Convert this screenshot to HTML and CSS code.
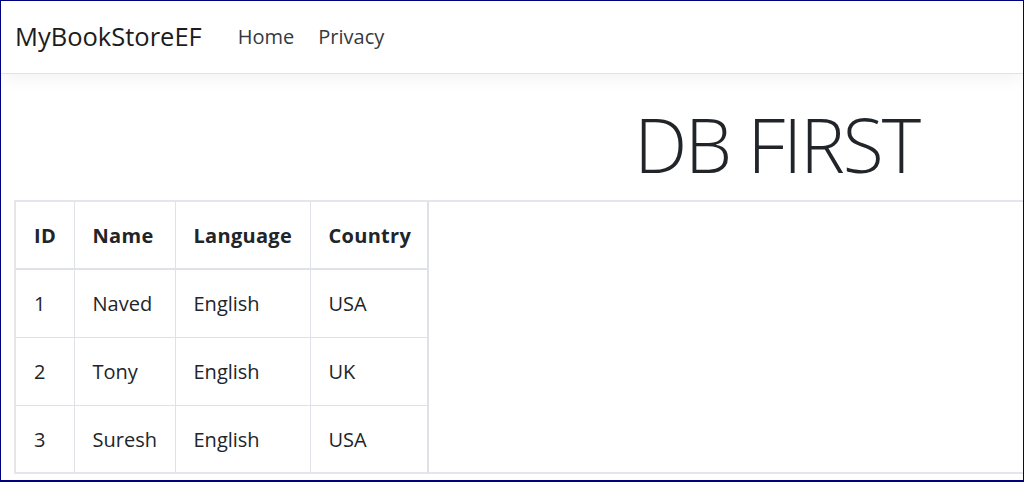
FILE: index.html
```html
<!DOCTYPE html>
<html lang="en">
<head>
<meta charset="utf-8">
<title>MyBookStoreEF</title>
<link rel="stylesheet" href="styles.css">
</head>
<body>
<div class="frame">
  <header class="navbar">
    <a class="brand" href="#">MyBookStoreEF</a>
    <nav class="nav">
      <a class="nav-link" href="#">Home</a>
      <a class="nav-link" href="#">Privacy</a>
    </nav>
  </header>
  <main class="content">
    <div class="title-row">
      <h1 class="title">DB FIRST</h1>
    </div>
    <div class="grid">
      <table class="books">
        <colgroup>
          <col class="c-id">
          <col class="c-name">
          <col class="c-lang">
          <col class="c-country">
        </colgroup>
        <thead>
          <tr><th>ID</th><th>Name</th><th>Language</th><th>Country</th></tr>
        </thead>
        <tbody>
          <tr><td>1</td><td>Naved</td><td>English</td><td>USA</td></tr>
          <tr><td>2</td><td>Tony</td><td>English</td><td>UK</td></tr>
          <tr><td>3</td><td>Suresh</td><td>English</td><td>USA</td></tr>
        </tbody>
      </table>
    </div>
  </main>
</div>
</body>
</html>
```
FILE: styles.css
```css
html, body {
  margin: 0;
  padding: 0;
  background: #ffffff;
}
body {
  font-family: "Open Sans", "Noto Sans", sans-serif;
  color: #212529;
}
.frame {
  width: 1024px;
  height: 482px;
  box-sizing: border-box;
  border: 1px solid #00007f;
  border-bottom-width: 2px;
  overflow: hidden;
  background: #fff;
}
.navbar {
  height: 72px;
  display: flex;
  align-items: center;
  padding: 0 14px;
  border-bottom: 1px solid #e3e3e3;
  box-shadow: 0 5px 15px rgba(0, 0, 0, 0.05);
  position: relative;
  z-index: 1;
}
.brand {
  font-size: 25.5px;
  color: #1c1c1c;
  text-decoration: none;
  margin-right: 36px;
  padding-bottom: 2px;
}
.nav {
  display: flex;
  gap: 24px;
}
.nav-link {
  font-size: 20px;
  color: #343a40;
  text-decoration: none;
  padding-bottom: 1px;
}
.content {
  padding-top: 24px;
}
.title-row {
  display: flex;
  justify-content: flex-end;
  padding-right: 104px;
  height: 102px;
}
.title {
  margin: 0;
  font-weight: 300;
  font-size: 75px;
  line-height: 92px;
  color: #212529;
  letter-spacing: -2px;
}
.grid {
  margin-left: 13px;
  border: 2px solid #e4e6ec;
  border-right: none;
  height: 274px;
  box-sizing: border-box;
}
.books {
  border-collapse: collapse;
  table-layout: fixed;
  font-size: 20px;
  line-height: 31px;
}
.c-id { width: 58px; }
.c-name { width: 101px; }
.c-lang { width: 135px; }
.c-country { width: 118px; }
.books th, .books td {
  border: 1px solid #dee2e6;
  padding: 18px 10px 18px 18px;
  text-align: left;
  white-space: nowrap;
}
.books th {
  font-weight: 700;
  border-bottom-width: 2px;
  padding-bottom: 17px;
  letter-spacing: 0.3px;
}
.books thead tr th {
  border-top: none;
}
.books tr > :first-child {
  border-left: none;
}
.books tr > :last-child {
  border-right: 2px solid #dee2e6;
}
.books tbody tr:last-child td {
  border-bottom: none;
}
```
